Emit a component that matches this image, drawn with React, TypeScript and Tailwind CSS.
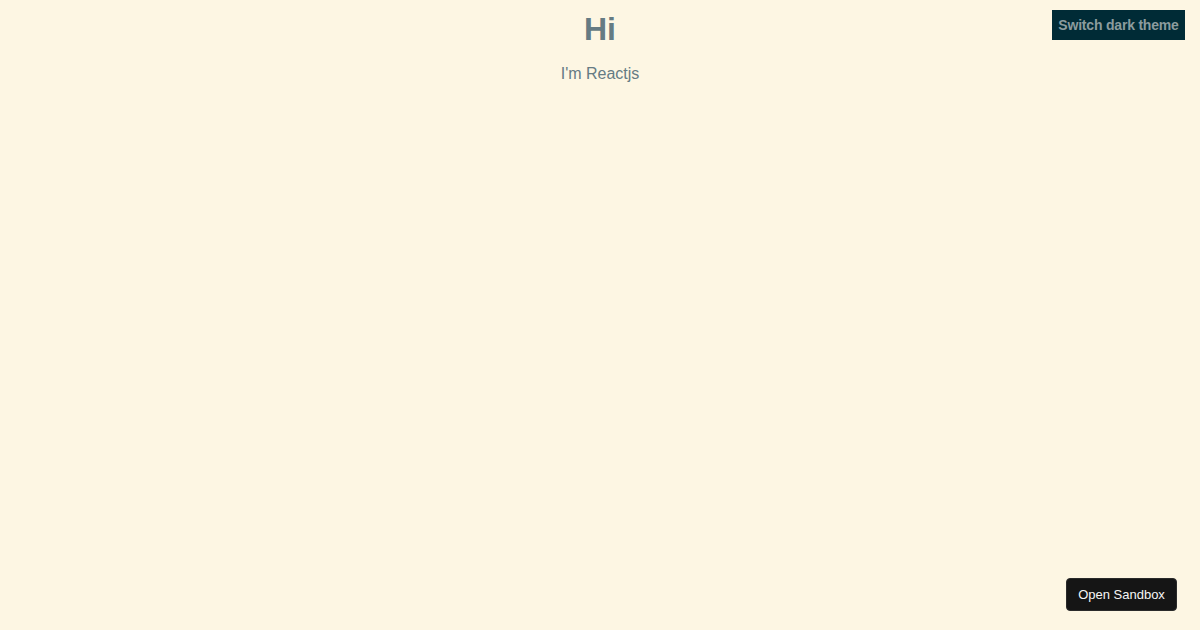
export default function App() {
  return (
    <div className="relative w-[1200px] h-[630px] bg-[#fdf6e3] text-[#657b83] overflow-hidden" style={{ fontFamily: '"Liberation Sans", Arial, sans-serif' }}>
      <div className="flex flex-col items-center pt-[5px]">
        <h1 className="text-[32px] font-bold leading-normal">Hi</h1>
        <p className="mt-[9px] text-[16px] leading-normal">I'm Reactjs</p>
      </div>
      <button className="absolute top-[10px] right-[15px] w-[133px] h-[30px] bg-[#002b36] text-[#8c9c9e] text-[14px] tracking-[-0.2px] font-bold flex items-center justify-center">
        Switch dark theme
      </button>
      <button className="absolute bottom-[19px] right-[23px] w-[111px] h-[33px] rounded-[4px] bg-[#151515] border border-[#2a2a2a] text-[#f5f5f5] text-[13px] flex items-center justify-center">
        Open Sandbox
      </button>
    </div>
  );
}
